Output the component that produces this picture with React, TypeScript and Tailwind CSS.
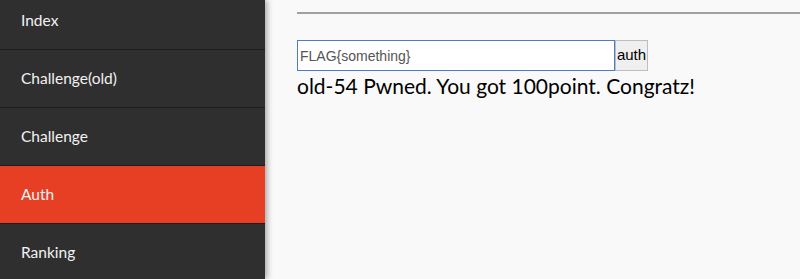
import React from "react";

const items = ["Index", "Challenge(old)", "Challenge", "Auth", "Ranking"];

export default function App(): JSX.Element {
  return (
    <div className="flex h-[279px] w-[800px] overflow-hidden bg-[#f9f9f9]">
      <aside className="relative z-10 w-[265px] shrink-0 bg-[#2f2f2f] shadow-[2px_0_6px_rgba(0,0,0,0.35)] font-['Lato',sans-serif]">
        <ul className="-mt-[8px]">
          {items.map((name) => (
            <li
              key={name}
              className={`flex h-[58px] items-center border-b border-[#1c1c1c] pl-[21px] text-[15.5px] text-[#f2f2f2] ${
                name === "Auth" ? "bg-[#e63f24]" : ""
              }`}
            >
              {name}
            </li>
          ))}
        </ul>
      </aside>

      <main className="flex-1 pl-[32px] pt-[12px]">
        <hr className="border-t-2 border-[#a0a0a0]" />
        <form className="mt-[26px] flex items-start" onSubmit={(e) => e.preventDefault()}>
          <input
            defaultValue="FLAG{something}"
            className="h-[31px] w-[318px] border border-[#4a7bd0] bg-white px-[2px] font-['Liberation_Sans',sans-serif] text-[14px] text-[#555] outline-none"
          />
          <button
            type="submit"
            className="h-[31px] w-[33px] border border-[#bdbdbd] bg-[#efefef] font-['Liberation_Sans',sans-serif] text-[15px] text-black"
          >
            auth
          </button>
        </form>
        <p className="font-['Lato',sans-serif] text-[21px] leading-[30px] text-black">
          old-54 Pwned. You got 100point. Congratz!
        </p>
      </main>
    </div>
  );
}
